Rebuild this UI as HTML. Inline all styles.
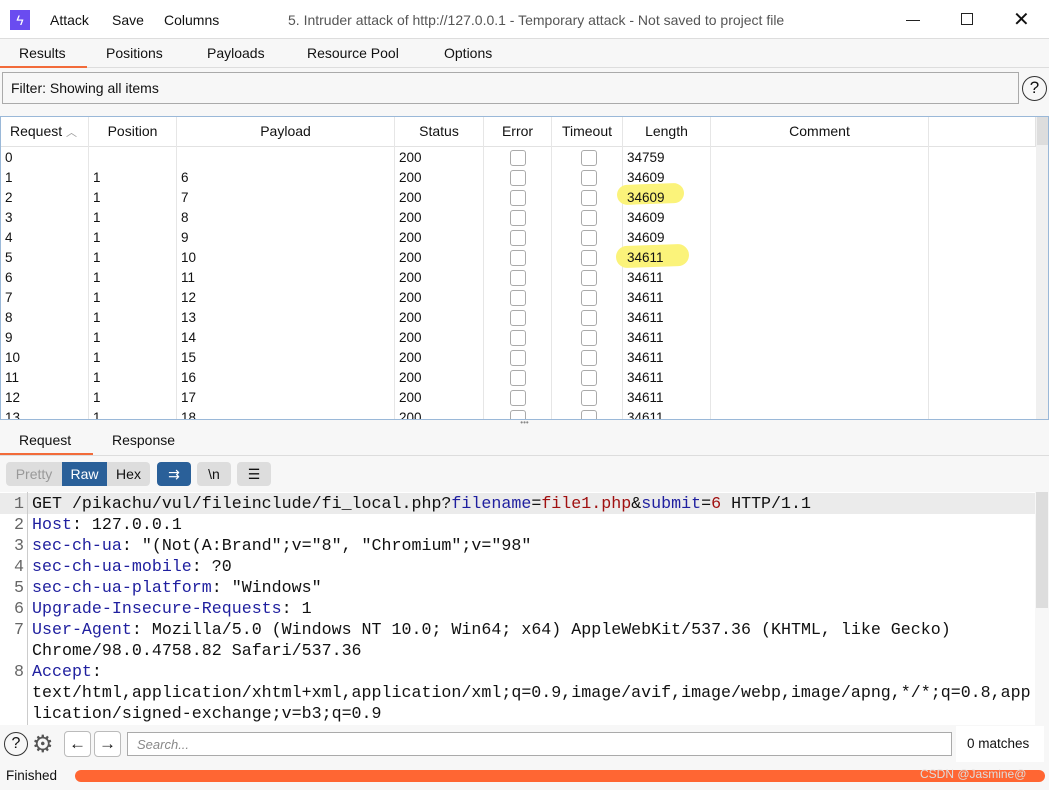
<!DOCTYPE html>
<html><head><meta charset="utf-8"><style>
*{margin:0;padding:0;box-sizing:border-box}
body{width:1049px;height:790px;overflow:hidden;background:#f7f7f7;font-family:"Liberation Sans",sans-serif;font-size:14px;color:#111;position:relative}
.abs{position:absolute}
.title{top:0;left:0;width:1049px;height:39px;background:#fff;border-bottom:1px solid #ddd}
.tabs{top:40px;left:0;width:1049px;height:28px;background:#f7f7f7;border-bottom:1px solid #ddd}
.tab{position:absolute;top:5px;font-size:14px}
.filter{top:72px;left:2px;width:1017px;height:32px;border:1px solid #aaa;background:#f7f7f7;padding:7px 8px;font-size:14px}
.table{top:116px;left:0;width:1049px;height:304px;background:#fff;border:1px solid #9ab8d8;overflow:hidden}
.hd{position:absolute;top:0;height:30px;border-right:1px solid #e2e2e2;border-bottom:1px solid #e2e2e2;text-align:center;line-height:29px;font-size:14px}
.row{position:absolute;left:0;height:20px;width:1035px;font-size:13.5px;line-height:20px}
.row span{position:absolute}
.cb{position:absolute;width:16px;height:16px;border:1px solid #aaa;border-radius:3px;background:#fff;top:2px}
.vl{position:absolute;top:0;width:1px;height:304px;background:#e6e6e6}
.code{font-family:"Liberation Mono",monospace;font-size:16.65px;line-height:21px;white-space:pre}
.ln{position:absolute;left:0;width:24px;text-align:right;color:#666}
.k{color:#1f1f9f}.v{color:#a01010}
.btn{position:absolute;top:462px;height:24px;border-radius:4px;font-size:14px;line-height:24px;text-align:center}
</style></head><body>
<div class="abs title">
 <div class="abs" style="left:10px;top:10px;width:20px;height:20px;background:#6a4cf0;color:#fff;font-size:14px;text-align:center;line-height:20px">ϟ</div>
 <div class="abs" style="left:50px;top:12px">Attack</div>
 <div class="abs" style="left:112px;top:12px">Save</div>
 <div class="abs" style="left:164px;top:12px">Columns</div>
 <div class="abs" style="left:288px;top:12px;color:#555">5. Intruder attack of http://127.0.0.1 - Temporary attack - Not saved to project file</div>
 <div class="abs" style="left:906px;top:20px;width:14px;height:1px;background:#222"></div>
 <div class="abs" style="left:961px;top:13px;width:12px;height:12px;border:1px solid #222"></div>
 <div class="abs" style="left:1013px;top:7px;font-size:20px;font-weight:200">✕</div>
</div>
<div class="abs tabs">
 <div class="tab" style="left:19px">Results</div>
 <div class="abs" style="left:0;top:26px;width:87px;height:2px;background:#f26b3a"></div>
 <div class="tab" style="left:106px">Positions</div>
 <div class="tab" style="left:207px">Payloads</div>
 <div class="tab" style="left:307px">Resource Pool</div>
 <div class="tab" style="left:444px">Options</div>
</div>
<div class="abs filter">Filter: Showing all items</div>
<div class="abs" style="left:1022px;top:76px;width:25px;height:25px;border:1.5px solid #333;border-radius:50%;text-align:center;line-height:22px;font-size:17px">?</div>
<div class="abs table">
 <div class="hd" style="left:0;width:88px;text-align:left;padding-left:9px">Request <span style="color:#999;font-size:11px">︿</span></div>
 <div class="hd" style="left:88px;width:88px">Position</div>
 <div class="hd" style="left:176px;width:218px">Payload</div>
 <div class="hd" style="left:394px;width:89px">Status</div>
 <div class="hd" style="left:483px;width:68px">Error</div>
 <div class="hd" style="left:551px;width:71px">Timeout</div>
 <div class="hd" style="left:622px;width:88px">Length</div>
 <div class="hd" style="left:710px;width:218px">Comment</div>
 <div class="hd" style="left:928px;width:107px"></div>
 <div class="vl" style="left:87px"></div><div class="vl" style="left:175px"></div><div class="vl" style="left:393px"></div><div class="vl" style="left:482px"></div><div class="vl" style="left:550px"></div><div class="vl" style="left:621px"></div><div class="vl" style="left:709px"></div><div class="vl" style="left:927px"></div>
 <div class="abs" style="left:1035px;top:0;width:14px;height:304px;background:#f0f0f0"></div>
 <div class="abs" style="left:1036px;top:0;width:12px;height:28px;background:#ddd"></div>
 <div class="abs" style="left:616px;top:67px;width:67px;height:20px;background:#fbf37a;border-radius:10px;transform:rotate(-2deg)"></div>
 <div class="abs" style="left:615px;top:128px;width:73px;height:22px;background:#fbf37a;border-radius:11px;transform:rotate(-2deg)"></div>
 <div id="rows"></div>
</div>
<div class="abs" style="left:0;top:420px;width:1049px;height:8px;text-align:center;font-size:8px;line-height:6px;color:#888">•••</div>
<div class="abs" style="left:0;top:428px;width:1049px;height:28px;border-bottom:1px solid #ddd">
 <div class="abs" style="left:19px;top:4px">Request</div>
 <div class="abs" style="left:112px;top:4px">Response</div>
 <div class="abs" style="left:0;top:25px;width:93px;height:2px;background:#f26b3a"></div>
</div>
<div class="btn" style="left:6px;width:144px;background:#ddd"></div>
<div class="btn" style="left:6px;width:56px;color:#999">Pretty</div>
<div class="btn" style="left:62px;width:45px;background:#2a6099;color:#fff;border-radius:0">Raw</div>
<div class="btn" style="left:107px;width:43px">Hex</div>
<div class="btn" style="left:157px;width:34px;background:#2a6099;color:#fff">⇉</div>
<div class="btn" style="left:197px;width:34px;background:#ddd">\n</div>
<div class="btn" style="left:237px;width:34px;background:#ddd">☰</div>
<div class="abs" style="left:0;top:492px;width:1035px;height:233px;background:#fff"></div>
<div class="abs" style="left:0;top:493px;width:1035px;height:21px;background:#ebebeb"></div>
<div class="abs" style="left:27px;top:492px;width:1px;height:233px;background:#ccc"></div>
<div class="abs" style="left:1036px;top:492px;width:12px;height:116px;background:#ddd"></div>
<div class="abs code" style="left:0;top:493px;width:1035px">
<div class="ln" style="top:0">1</div><div class="ln" style="top:21px">2</div><div class="ln" style="top:42px">3</div><div class="ln" style="top:63px">4</div><div class="ln" style="top:84px">5</div><div class="ln" style="top:105px">6</div><div class="ln" style="top:126px">7</div><div class="ln" style="top:168px">8</div>
<div class="abs" style="left:32px;top:0">GET /pikachu/vul/fileinclude/fi_local.php?<span class="k">filename</span>=<span class="v">file1.php</span>&amp;<span class="k">submit</span>=<span class="v">6</span> HTTP/1.1
<span class="k">Host</span>: 127.0.0.1
<span class="k">sec-ch-ua</span>: "(Not(A:Brand";v="8", "Chromium";v="98"
<span class="k">sec-ch-ua-mobile</span>: ?0
<span class="k">sec-ch-ua-platform</span>: "Windows"
<span class="k">Upgrade-Insecure-Requests</span>: 1
<span class="k">User-Agent</span>: Mozilla/5.0 (Windows NT 10.0; Win64; x64) AppleWebKit/537.36 (KHTML, like Gecko)
Chrome/98.0.4758.82 Safari/537.36
<span class="k">Accept</span>:
text/html,application/xhtml+xml,application/xml;q=0.9,image/avif,image/webp,image/apng,*/*;q=0.8,app
lication/signed-exchange;v=b3;q=0.9</div>
</div>
<div class="abs" style="left:4px;top:732px;width:24px;height:24px;border:1.5px solid #333;border-radius:50%;text-align:center;line-height:21px;font-size:16px">?</div>
<div class="abs" style="left:32px;top:730px;font-size:24px;color:#555">⚙</div>
<div class="abs" style="left:64px;top:731px;width:27px;height:26px;border:1px solid #bbb;border-radius:4px;background:#fff;text-align:center;line-height:24px;font-size:17px">←</div>
<div class="abs" style="left:94px;top:731px;width:27px;height:26px;border:1px solid #bbb;border-radius:4px;background:#fff;text-align:center;line-height:24px;font-size:17px">→</div>
<div class="abs" style="left:127px;top:732px;width:825px;height:24px;border:1px solid #aaa;background:#fff;padding:4px 9px;font-size:13px;font-style:italic;color:#888">Search...</div>
<div class="abs" style="left:956px;top:726px;width:88px;height:36px;background:#fff"></div>
<div class="abs" style="left:967px;top:736px;font-size:13.5px">0 matches</div>
<div class="abs" style="left:6px;top:768px;font-size:13.5px">Finished</div>
<div class="abs" style="left:75px;top:770px;width:970px;height:12px;background:#ff6633;border-radius:6px"></div>
<div class="abs" style="left:920px;top:767px;font-size:12px;color:#ddd">CSDN @Jasmine@</div>
<script>
var p=['','6','7','8','9','10','11','12','13','14','15','16','17','18'];
var L=['34759','34609','34609','34609','34609','34611','34611','34611','34611','34611','34611','34611','34611','34611'];
var h='';for(var i=0;i<14;i++){h+='<div class="row" style="top:'+(31+i*20)+'px"><span style="left:4px">'+i+'</span><span style="left:92px">'+(i?1:'')+'</span><span style="left:180px">'+p[i]+'</span><span style="left:398px">200</span><div class="cb" style="left:509px"></div><div class="cb" style="left:580px"></div><span style="left:626px">'+L[i]+'</span></div>';}
document.getElementById('rows').innerHTML=h;
</script>
</body></html>
